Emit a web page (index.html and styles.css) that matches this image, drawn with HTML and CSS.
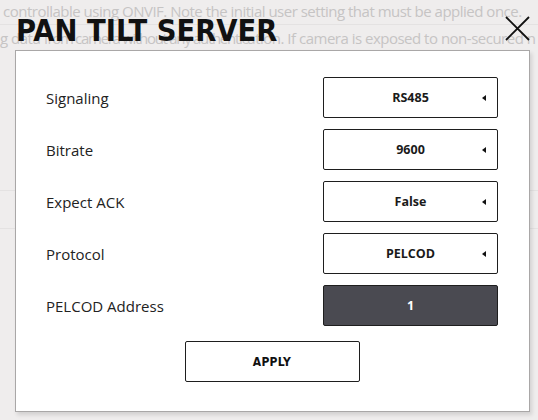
FILE: index.html
```html
<!DOCTYPE html>
<html>
<head>
<meta charset="utf-8">
<link rel="stylesheet" href="styles.css">
</head>
<body>
<div class="page">
  <p class="bg-line l1">controllable using ONVIF. Note the initial user setting that must be applied once.</p>
  <div class="bg-rule r0"></div>
  <p class="bg-line l2">g data <span class="tight">from camera without any authentic</span>ation. If camera is exposed to non-secured n</p>
  <div class="bg-rule r1"></div>
  <div class="bg-rule r2"></div>
</div>
<div class="modal">
  <div class="modal-head">
    <h1 class="title">PAN TILT SERVER</h1>
    <button class="close" aria-label="Close">
      <svg width="25" height="25" viewBox="0 0 25 25"><path d="M1 1 L24 24 M24 1 L1 24" stroke="#111" stroke-width="1.8" fill="none"/></svg>
    </button>
  </div>
  <div class="card">
    <div class="row">
      <span class="label">Signaling</span>
      <div class="select"><span class="val">RS485</span><span class="arrow"></span></div>
    </div>
    <div class="row">
      <span class="label">Bitrate</span>
      <div class="select"><span class="val">9600</span><span class="arrow"></span></div>
    </div>
    <div class="row">
      <span class="label">Expect ACK</span>
      <div class="select"><span class="val">False</span><span class="arrow"></span></div>
    </div>
    <div class="row">
      <span class="label">Protocol</span>
      <div class="select"><span class="val">PELCOD</span><span class="arrow"></span></div>
    </div>
    <div class="row">
      <span class="label">PELCOD Address</span>
      <div class="input"><span class="val">1</span></div>
    </div>
    <div class="actions">
      <button class="apply">APPLY</button>
    </div>
  </div>
</div>
</body>
</html>
```
FILE: styles.css
```css
html, body {
  margin: 0;
  padding: 0;
}
body {
  width: 538px;
  height: 420px;
  overflow: hidden;
  background: #efeded;
  position: relative;
  font-family: "Open Sans", "Noto Sans", sans-serif;
}
.page {
  position: absolute;
  inset: 0;
  overflow: hidden;
}
.bg-line {
  position: absolute;
  margin: 0;
  white-space: nowrap;
  font-size: 15px;
  letter-spacing: -0.5px;
  color: #c6c4c4;
  line-height: 20px;
}
.l1 { top: 1px; left: 3px; }
.l2 { top: 28px; left: 0; }
.tight { letter-spacing: -1.3px; }
.bg-rule {
  position: absolute;
  left: 0;
  right: 0;
  height: 1px;
  background: #e4e2e2;
}
.r0 { top: 24px; }
.r1 { top: 190px; }
.r2 { top: 228px; }

.modal {
  position: absolute;
  left: 15px;
  top: 0;
  width: 515px;
}
.modal-head {
  display: flex;
  justify-content: space-between;
  align-items: flex-start;
  height: 50px;
}
.title {
  margin: 14px 0 0 1px;
  font-family: "DejaVu Sans Condensed", "DejaVu Sans", sans-serif;
  font-weight: bold;
  font-size: 30.5px;
  line-height: 34px;
  letter-spacing: 0;
  color: #111;
}
.close {
  margin: 16px 0 0 0;
  padding: 0;
  border: 0;
  background: none;
  width: 25px;
  height: 25px;
}
.close svg { display: block; }
.card {
  background: #fff;
  border: 1px solid #a9a7a7;
  box-shadow: 2px 3px 4px rgba(0,0,0,0.12);
  padding: 26px 31px 29px 30px;
  display: flex;
  flex-direction: column;
  gap: 11px;
  height: 362px;
  box-sizing: border-box;
}
.row {
  display: flex;
  justify-content: space-between;
  align-items: center;
  height: 41px;
}
.label {
  font-size: 15px;
  color: #222;
}
.select, .input {
  width: 175px;
  height: 41px;
  box-sizing: border-box;
  border: 1px solid #1e1e1e;
  border-radius: 2px;
  display: flex;
  align-items: center;
  justify-content: center;
  position: relative;
}
.val {
  font-size: 12.5px;
  font-weight: bold;
  color: #1a1a1a;
}
.arrow {
  position: absolute;
  right: 11px;
  top: 17px;
  width: 0;
  height: 0;
  border-top: 3px solid transparent;
  border-bottom: 3px solid transparent;
  border-right: 4px solid #111;
}
.input {
  background: #4a4a51;
}
.input .val { color: #fff; }
.actions {
  display: flex;
  justify-content: center;
  margin-top: 4px;
}
.apply {
  width: 175px;
  height: 41px;
  background: #fff;
  border: 1px solid #1e1e1e;
  border-radius: 2px;
  font-family: "DejaVu Sans Condensed", "DejaVu Sans", sans-serif;
  font-weight: bold;
  font-size: 12px;
  letter-spacing: 0.3px;
  color: #111;
  padding: 0;
}
```
